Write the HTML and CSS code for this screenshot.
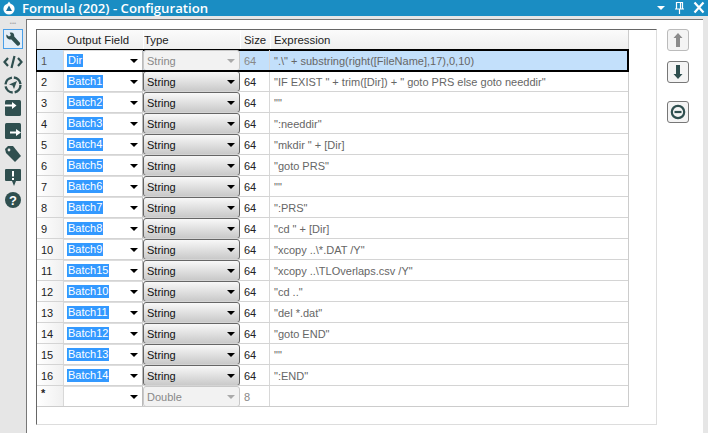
FILE: index.html
```html
<!DOCTYPE html>
<html lang="en">
<head>
<meta charset="utf-8">
<title>Formula (202) - Configuration</title>
<link rel="stylesheet" href="styles.css">
</head>
<body>
<header class="titlebar">
  <svg class="logo" width="14" height="14" viewBox="0 0 14 14"><circle cx="7" cy="8" r="5.6" fill="#fff"/><path d="M7 0.5 L10 5 H4Z" fill="#fff"/><path d="M7 4.5 L10 10 H4Z" fill="#1a6f9c"/></svg>
  <span class="title">Formula (202) - Configuration</span>
  <span class="winbtns">
    <svg width="10" height="16" viewBox="0 0 10 16"><path d="M1 6 H9 L5 10Z" fill="#fff"/></svg>
    <svg width="11" height="16" viewBox="0 0 11 16"><path d="M2.5 2.5 H8.5 V9 H2.5Z M1 9 H10 M5.5 9 V14 M6.5 3 V9" fill="none" stroke="#fff" stroke-width="1.2"/></svg>
    <svg width="12" height="16" viewBox="0 0 12 16"><path d="M1.5 2.5 L10.5 12.5 M10.5 2.5 L1.5 12.5" stroke="#fff" stroke-width="2.2"/></svg>
  </span>
</header>
<div class="main">
  <nav class="sidebar">
    <div class="dots">•••</div>
    <div class="tool active"><svg width="22" height="22" viewBox="0 0 22 22"><path d="M3 5.5 L6 8 L8.5 6.5 L7 3.5 C10 2 13 4 12.5 8 L19.5 15.5 C20.5 17.5 18 20 16 19 L9 11.5 C5 12.5 2 9 3 5.5Z" fill="#2f4f4f"/></svg></div>
    <div class="tool"><svg width="20" height="16" viewBox="0 0 20 16"><path d="M5 4 L1.5 8 L5 12 M15 4 L18.5 8 L15 12 M11.5 2 L8.5 14" fill="none" stroke="#2f4f4f" stroke-width="2.2"/></svg></div>
    <div class="tool"><svg width="20" height="20" viewBox="0 0 20 20"><circle cx="10" cy="10" r="7.5" fill="none" stroke="#2f4f4f" stroke-width="2.4" stroke-dasharray="10 2"/><path d="M14 6 L11 14 L9.5 10.5 L6 9.5Z" fill="#2f4f4f"/></svg></div>
    <div class="tool"><svg width="18" height="18" viewBox="0 0 18 18"><rect x="1" y="1" width="16" height="16" rx="1.5" fill="#2f4f4f"/><path d="M1 5.5 H8 V3 L12.5 6.5 L8 10 V7.5 H1Z" fill="#fff"/></svg></div>
    <div class="tool"><svg width="18" height="18" viewBox="0 0 18 18"><rect x="1" y="1" width="16" height="16" rx="1.5" fill="#2f4f4f"/><path d="M6 9.5 H12 V7 L17 10.5 L12 14 V11.5 H6Z" fill="#fff"/></svg></div>
    <div class="tool"><svg width="18" height="18" viewBox="0 0 18 18"><path d="M1 4 L4 1 H9 L17 11 L11 17 L2 8Z" fill="#2f4f4f"/><circle cx="5" cy="5" r="1.4" fill="#e6e6e6"/></svg></div>
    <div class="tool"><svg width="18" height="19" viewBox="0 0 18 19"><path d="M2 1 H16 C17 1 17 2 17 2 V12 C17 13 16 13 16 13 H12 L10 18 L8 13 H2 C1 13 1 12 1 12 V2 C1 1 2 1 2 1Z" fill="#2f4f4f"/><path d="M8 3 H10 V8.5 H8Z M8 10 H10 V12 H8Z" fill="#fff"/></svg></div>
    <div class="tool"><svg width="18" height="18" viewBox="0 0 18 18"><circle cx="9" cy="9" r="8" fill="#2f4f4f"/><text x="9" y="13.5" text-anchor="middle" class="qmark">?</text></svg></div>
  </nav>
  <section class="panel">
    <div class="gridarea">
      <div class="grid">
        <div class="row head">
          <div class="c num"></div>
          <div class="c field headcell">Output Field</div>
          <div class="c type headcell">Type</div>
          <div class="c size headcell">Size</div>
          <div class="c expr headcell">Expression</div>
        </div>
        <div class="row selected">
          <div class="c num">1</div>
          <div class="c field"><mark>Dir</mark><i class="arrow"></i></div>
          <div class="c type"><div class="combo off">String<i class="arrow"></i></div></div>
          <div class="c size off-text">64</div>
          <div class="c expr">".\" + substring(right([FileName],17),0,10)</div>
        </div>
        <div class="row"><div class="c num">2</div><div class="c field"><mark>Batch1</mark><i class="arrow"></i></div><div class="c type"><div class="combo">String<i class="arrow"></i></div></div><div class="c size">64</div><div class="c expr">"IF EXIST " + trim([Dir]) + " goto PRS else goto needdir"</div></div>
        <div class="row"><div class="c num">3</div><div class="c field"><mark>Batch2</mark><i class="arrow"></i></div><div class="c type"><div class="combo">String<i class="arrow"></i></div></div><div class="c size">64</div><div class="c expr">""</div></div>
        <div class="row"><div class="c num">4</div><div class="c field"><mark>Batch3</mark><i class="arrow"></i></div><div class="c type"><div class="combo">String<i class="arrow"></i></div></div><div class="c size">64</div><div class="c expr">":needdir"</div></div>
        <div class="row"><div class="c num">5</div><div class="c field"><mark>Batch4</mark><i class="arrow"></i></div><div class="c type"><div class="combo">String<i class="arrow"></i></div></div><div class="c size">64</div><div class="c expr">"mkdir " + [Dir]</div></div>
        <div class="row"><div class="c num">6</div><div class="c field"><mark>Batch5</mark><i class="arrow"></i></div><div class="c type"><div class="combo">String<i class="arrow"></i></div></div><div class="c size">64</div><div class="c expr">"goto PRS"</div></div>
        <div class="row"><div class="c num">7</div><div class="c field"><mark>Batch6</mark><i class="arrow"></i></div><div class="c type"><div class="combo">String<i class="arrow"></i></div></div><div class="c size">64</div><div class="c expr">""</div></div>
        <div class="row"><div class="c num">8</div><div class="c field"><mark>Batch7</mark><i class="arrow"></i></div><div class="c type"><div class="combo">String<i class="arrow"></i></div></div><div class="c size">64</div><div class="c expr">":PRS"</div></div>
        <div class="row"><div class="c num">9</div><div class="c field"><mark>Batch8</mark><i class="arrow"></i></div><div class="c type"><div class="combo">String<i class="arrow"></i></div></div><div class="c size">64</div><div class="c expr">"cd " + [Dir]</div></div>
        <div class="row"><div class="c num">10</div><div class="c field"><mark>Batch9</mark><i class="arrow"></i></div><div class="c type"><div class="combo">String<i class="arrow"></i></div></div><div class="c size">64</div><div class="c expr">"xcopy ..\*.DAT /Y"</div></div>
        <div class="row"><div class="c num">11</div><div class="c field"><mark>Batch15</mark><i class="arrow"></i></div><div class="c type"><div class="combo">String<i class="arrow"></i></div></div><div class="c size">64</div><div class="c expr">"xcopy ..\TLOverlaps.csv /Y"</div></div>
        <div class="row"><div class="c num">12</div><div class="c field"><mark>Batch10</mark><i class="arrow"></i></div><div class="c type"><div class="combo">String<i class="arrow"></i></div></div><div class="c size">64</div><div class="c expr">"cd .."</div></div>
        <div class="row"><div class="c num">13</div><div class="c field"><mark>Batch11</mark><i class="arrow"></i></div><div class="c type"><div class="combo">String<i class="arrow"></i></div></div><div class="c size">64</div><div class="c expr">"del *.dat"</div></div>
        <div class="row"><div class="c num">14</div><div class="c field"><mark>Batch12</mark><i class="arrow"></i></div><div class="c type"><div class="combo">String<i class="arrow"></i></div></div><div class="c size">64</div><div class="c expr">"goto END"</div></div>
        <div class="row"><div class="c num">15</div><div class="c field"><mark>Batch13</mark><i class="arrow"></i></div><div class="c type"><div class="combo">String<i class="arrow"></i></div></div><div class="c size">64</div><div class="c expr">""</div></div>
        <div class="row"><div class="c num">16</div><div class="c field"><mark>Batch14</mark><i class="arrow"></i></div><div class="c type"><div class="combo">String<i class="arrow"></i></div></div><div class="c size">64</div><div class="c expr">":END"</div></div>
        <div class="row"><div class="c num star">*</div><div class="c field"><i class="arrow"></i></div><div class="c type"><div class="combo off">Double<i class="arrow"></i></div></div><div class="c size off-text">8</div><div class="c expr"></div></div>
      </div>
    </div>
    <div class="actions">
      <button class="btn off-btn" type="button" aria-label="Move up"><svg width="12" height="16" viewBox="0 0 12 16"><path d="M6 1 L10.5 6 H8 V15 H4 V6 H1.5Z" fill="#8c8c8c"/></svg></button>
      <button class="btn" type="button" aria-label="Move down"><svg width="12" height="16" viewBox="0 0 12 16"><path d="M4 1 H8 V10 H10.5 L6 15 L1.5 10 H4Z" fill="#2f4f4f"/></svg></button>
      <button class="btn third" type="button" aria-label="Remove"><svg width="16" height="16" viewBox="0 0 16 16"><circle cx="8" cy="8" r="6.2" fill="none" stroke="#2f4f4f" stroke-width="2.2"/><path d="M4.5 8 H11.5" stroke="#2f4f4f" stroke-width="2.2"/></svg></button>
    </div>
  </section>
</div>
</body>
</html>
```
FILE: styles.css
```css
* { box-sizing: border-box; }
html, body { margin: 0; height: 100%; overflow: hidden; }
body {
  width: 708px;
  height: 433px;
  background: #e6e6e6;
  font-family: "Liberation Sans", sans-serif;
  font-size: 11px;
  color: #222;
  display: flex;
  flex-direction: column;
}
.titlebar {
  height: 16px;
  flex: none;
  background: #1a8dc3;
  color: #fff;
  display: flex;
  align-items: center;
  padding: 0 3px 0 2px;
}
.logo { margin-right: 6px; }
.title {
  font-family: "Open Sans", sans-serif;
  font-size: 13.2px;
  font-weight: 600;
  line-height: 16px;
  flex: 1;
}
.winbtns { display: flex; gap: 8px; align-items: center; height: 16px; }
.main { flex: 1; display: flex; min-height: 0; padding-top: 3px; }
.sidebar {
  width: 26px;
  flex: none;
  display: flex;
  flex-direction: column;
  align-items: center;
}
.dots { font-size: 6px; line-height: 8px; height: 10px; color: #aaa; }
.tool {
  width: 20px;
  height: 20px;
  margin-bottom: 3px;
  display: flex;
  align-items: center;
  justify-content: center;
}
.tool.active { border: 1px solid #4a9fe8; background: #e4eef8; }
.qmark { font: bold 13px "Liberation Sans", sans-serif; fill: #fff; }
.panel {
  flex: 1;
  background: #fff;
  border-left: 1px solid #777;
  border-top: 1px solid #777;
  margin-right: 5px;
  padding: 9px 0 0 9px;
  display: flex;
}
.gridarea {
  width: 621px;
  height: 396px;
  border-left: 1px solid #666;
  border-top: 1px solid #666;
  border-right: 1px solid #ddd;
  border-bottom: 1px solid #ddd;
  flex: none;
}
.grid { width: 592px; border-right: 1px solid #ccc; border-bottom: 1px solid #ccc; }
.row {
  display: grid;
  grid-template-columns: 27px 79px 97px 30px 1fr;
  height: 21px;
  border-bottom: 1px solid #d4d4d4;
  position: relative;
  line-height: 22px;
}
.row:last-child { border-bottom: 0; height: 20px; }
.head {
  height: 20px;
  border-bottom: 0;
  background: linear-gradient(#fbfbfb, #eee);
  color: #222;
  font-size: 11.4px;
  line-height: 20px;
}
.c { padding-left: 2px; white-space: nowrap; overflow: hidden; position: relative; }
.num {
  padding-left: 4px;
  background: linear-gradient(90deg, #fff, #f0f0f0);
  border-right: 1px solid #d8d8d8;
  color: #222;
}
.star { line-height: 14px; font-weight: bold; }
.head .num { border-right: 0; background: none; }
.headcell { border-left: 1px solid #fff; padding-left: 3px; }
.field {
  border-right: 1px solid #bbb;
  border-top: 1px solid #ddd;
  padding: 3px 0 0 3px;
  line-height: 13px;
}
.head .field { border: 0; padding: 0 0 0 3px; line-height: 20px; }
mark { background: #3399ff; color: #fff; display: inline-block; line-height: 13px; padding: 0 1px; }
.arrow {
  position: absolute;
  right: 4px;
  top: 8px;
  width: 0;
  height: 0;
  border-left: 4px solid transparent;
  border-right: 4px solid transparent;
  border-top: 4px solid #000;
}
.type { padding: 0; }
.combo {
  height: 21px;
  padding-left: 3px;
  line-height: 21px;
  border: 1px solid #666;
  border-radius: 3px;
  background: linear-gradient(#f8f8f8, #c9c9c9);
  color: #111;
  position: relative;
}
.combo.off { background: #f2f2f2; border-color: #c8c8c8; color: #888; }
.combo.off .arrow { border-top-color: #aaa; }
.size { padding-left: 4px; border-right: 1px solid #d8d8d8; }
.off-text { color: #888; }
.expr { padding-left: 4px; color: #666; }
.head .size, .head .expr { color: #222; border-right: 0; padding-left: 3px; }
.selected { background: #c3e0fb; z-index: 2; outline: 2px solid #000; outline-offset: -1px; }
.selected .num { background: #c3e0fb; color: #555; }
.selected .field { background: #fff; }
.actions {
  margin-left: 10px;
  display: flex;
  flex-direction: column;
  gap: 10px;
}
.btn {
  width: 22px;
  height: 22px;
  padding: 0;
  background: #f4f4f4;
  border: 1px solid #777;
  border-radius: 3px;
  display: flex;
  align-items: center;
  justify-content: center;
}
.off-btn { border-color: #bbb; }
.third { margin-top: 8px; }
```
